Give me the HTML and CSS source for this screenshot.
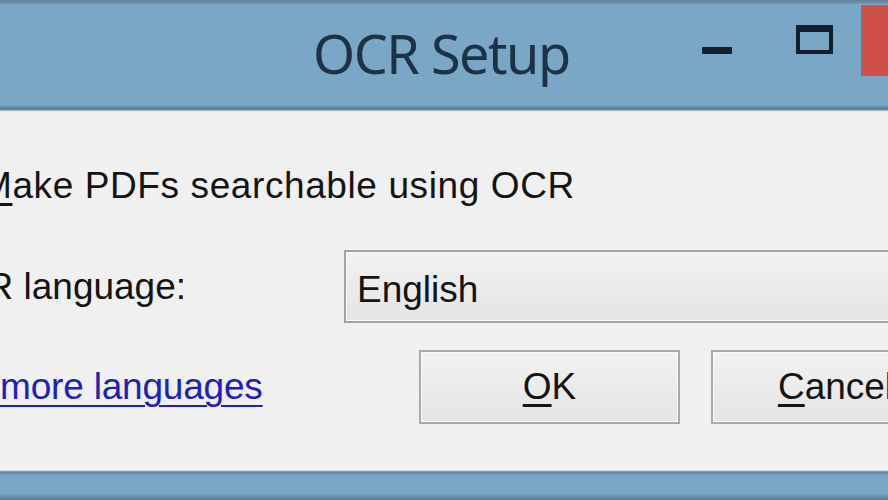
FILE: index.html
```html
<!DOCTYPE html>
<html lang="en">
<head>
<meta charset="utf-8">
<title>OCR Setup</title>
<link rel="stylesheet" href="styles.css">
</head>
<body>
<div class="window">
  <div class="frame-top"></div>
  <div class="titlebar">
    <div class="title">OCR Setup</div>
    <div class="controls">
      <span class="ctl min"></span>
      <span class="ctl max"></span>
      <span class="ctl close"></span>
    </div>
  </div>
  <div class="title-edge"></div>
  <div class="client">
    <div class="content">
      <div class="check-row">
        <span class="checkbox"></span>
        <span class="check-text"><u>M</u>ake PDFs searchable using OCR</span>
      </div>
      <div class="lang-row">
        <span class="label">OCR language:</span>
        <div class="combo">English</div>
      </div>
      <div class="action-row">
        <div class="link-cell"><a class="link" href="#">Get more languages</a></div>
        <div class="buttons">
          <button class="btn" type="button"><u>O</u>K</button>
          <button class="btn btn-cancel" type="button"><u>C</u>ancel</button>
        </div>
      </div>
    </div>
  </div>
  <div class="bottom-edge"></div>
</div>
</body>
</html>
```

FILE: styles.css
```css
html, body {
  margin: 0;
  padding: 0;
  width: 888px;
  height: 500px;
  overflow: hidden;
  background: #7aa7c6;
}

.window {
  width: 888px;
  height: 500px;
  overflow: hidden;
  display: flex;
  flex-direction: column;
  background: #7aa7c6;
}

.frame-top {
  height: 4px;
  flex: none;
  background: linear-gradient(#627f95, #7396b1);
}

.titlebar {
  height: 101px;
  flex: none;
  display: flex;
  background: #7aa7c6;
}

.title {
  width: 389px;
  padding-left: 313px;
  flex: none;
  font-family: "Noto Sans", "Open Sans", sans-serif;
  font-size: 54px;
  letter-spacing: -1.5px;
  line-height: 98px;
  color: #1b3247;
  white-space: nowrap;
}

.controls {
  display: flex;
  align-items: flex-start;
  flex: none;
}

.ctl {
  display: block;
  flex: none;
}

.ctl.min {
  width: 30px;
  height: 7px;
  margin-top: 43px;
  background: #14202c;
  border-radius: 1px;
}

.ctl.max {
  width: 29px;
  height: 18px;
  margin-left: 64px;
  margin-top: 21px;
  border: 4px solid #14202c;
  border-top-width: 7px;
}

.ctl.close {
  width: 60px;
  height: 71px;
  margin-left: 28px;
  margin-top: 1px;
  background: #cf4f49;
}

.title-edge {
  height: 8px;
  flex: none;
  background: linear-gradient(#7aa3c0 0, #5f7f96 3px, #67879e 5px, #dbe6ef 6px, #eef3f8 8px);
}

.client {
  height: 356px;
  flex: none;
  background: #f0f0f0;
  overflow: hidden;
  font-family: "Liberation Sans", Arial, sans-serif;
  font-size: 37px;
  line-height: 42px;
  color: #141414;
}

.bottom-edge {
  height: 31px;
  flex: none;
  background: linear-gradient(#fbfdfe 0, #f4f8fb 1px, #9fb8ca 2px, #5f84a0 3px, #6d97b5 5px, #7aa7c6 7px, #7aa7c6 25px, #6a93b0 27px, #587d97 31px);
}

.content {
  margin-left: -69px;
  padding-top: 52px;
  display: flex;
  flex-direction: column;
}

.check-row {
  display: flex;
  align-items: center;
  gap: 14px;
  height: 42px;
}

.checkbox {
  width: 32px;
  height: 32px;
  flex: none;
  border: 2px solid #707070;
  background: #fff;
}

.check-text {
  white-space: nowrap;
  letter-spacing: 0.6px;
}

u {
  text-decoration-thickness: 3px;
  text-underline-offset: 5px;
}

.lang-row {
  margin-top: 43px;
  display: flex;
  align-items: center;
}

.label {
  width: 413px;
  flex: none;
  white-space: nowrap;
}

.combo {
  flex: none;
  width: 638px;
  height: 42px;
  padding: 17px 9px 10px 11px;
  border: 2px solid #a3a3a3;
  box-shadow: inset 0 0 0 1px #f9f9f9;
  background: linear-gradient(#f2f2f2, #e4e4e4);
  white-space: nowrap;
}

.action-row {
  margin-top: 27px;
  display: flex;
  align-items: center;
}

.link-cell {
  width: 413px;
  flex: none;
}

.link {
  color: #2020bd;
  white-space: nowrap;
  letter-spacing: -0.2px;
  text-decoration: underline;
  text-decoration-thickness: 2px;
  text-underline-offset: 6px;
}

.buttons {
  display: flex;
  gap: 31px;
  padding-left: 75px;
}

.btn {
  width: 261px;
  height: 74px;
  flex: none;
  border: 2px solid #a9a9a9;
  box-shadow: inset 0 0 0 1px #fafafa;
  background: linear-gradient(#f2f2f2, #e4e4e4);
  font: inherit;
  color: #141414;
  padding: 0 0 0 0;
  margin: 0;
}

.btn-cancel {
  padding-right: 12px;
}
```
